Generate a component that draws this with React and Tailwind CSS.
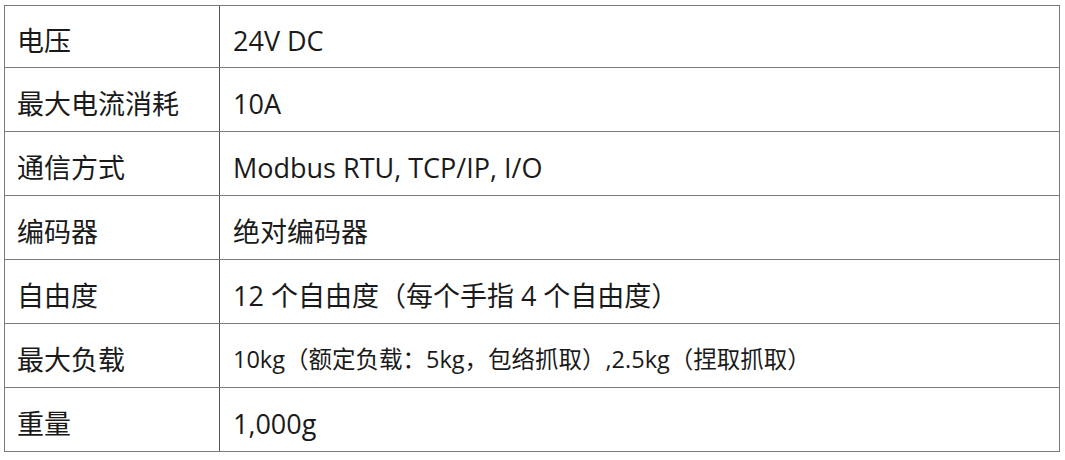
const rows = [
  { label: "电压", value: "24V DC" },
  { label: "最大电流消耗", value: "10A" },
  { label: "通信方式", value: "Modbus RTU, TCP/IP, I/O" },
  { label: "编码器", value: "绝对编码器" },
  { label: "自由度", value: "12 个自由度（每个手指 4 个自由度）" },
  { label: "最大负载", value: "10kg（额定负载：5kg，包络抓取）,2.5kg（捏取抓取）", small: true },
  { label: "重量", value: "1,000g" },
];

export default function App() {
  return (
    <div
      className="h-[460px] w-[1065px] bg-white pl-[4px] pt-[5px] text-[#1a1a1a]"
      style={{ fontFamily: '"Open Sans", "Noto Sans CJK SC", sans-serif' }}
    >
      <div className="w-[1056px] border-[1.5px] border-[#7a7a7a]">
        {rows.map((row, index) => (
          <div
            className={`grid grid-cols-[215px_1fr] ${index > 0 ? "h-[64px] border-t-[1.5px] border-[#7a7a7a]" : "h-[61px]"}`}
            key={row.label}
          >
            <div className="flex items-center border-r-[1.5px] border-[#555] pl-[12px] pt-[8px] text-[27px] leading-none">
              {row.label}
            </div>
            <div className={`flex items-center pl-[13px] pt-[8px] leading-none ${row.small ? "text-[23.5px]" : "text-[27px]"}`}>
              {row.value}
            </div>
          </div>
        ))}
      </div>
    </div>
  );
}
